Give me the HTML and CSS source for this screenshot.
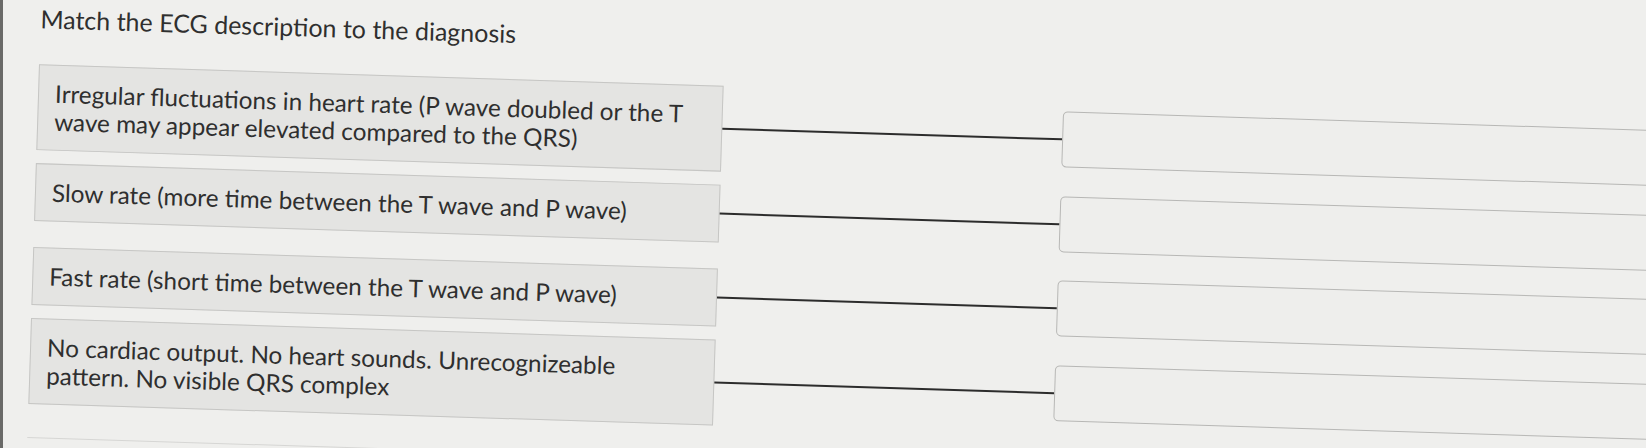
FILE: index.html
```html
<!DOCTYPE html>
<html lang="en">
<head>
<meta charset="utf-8">
<title>Match the ECG description to the diagnosis</title>
<link rel="stylesheet" href="styles.css">
</head>
<body>
<div class="page">
  <h1 class="title">Match the ECG description to the diagnosis</h1>
  <div class="rows">
    <div class="row">
      <div class="prompt">Irregular fluctuations in heart rate (P wave doubled or the T<br>wave may appear elevated compared to the QRS)</div>
      <div class="link"></div>
      <div class="answer"></div>
    </div>
    <div class="row">
      <div class="prompt">Slow rate (more time between the T wave and P wave)</div>
      <div class="link"></div>
      <div class="answer"></div>
    </div>
    <div class="row row-spaced">
      <div class="prompt">Fast rate (short time between the T wave and P wave)</div>
      <div class="link"></div>
      <div class="answer"></div>
    </div>
    <div class="row">
      <div class="prompt">No cardiac output. No heart sounds. Unrecognizeable<br>pattern. No visible QRS complex</div>
      <div class="link"></div>
      <div class="answer"></div>
    </div>
  </div>
  <div class="rule"></div>
</div>
</body>
</html>
```

FILE: styles.css
```css
html, body {
  margin: 0;
  padding: 0;
}

body {
  width: 1646px;
  height: 448px;
  overflow: hidden;
  background: #efefed;
  border-left: 3px solid #6a6a68;
  box-sizing: border-box;
  font-family: Lato, "Open Sans", "Liberation Sans", sans-serif;
  color: #2f2f2f;
}

.page {
  width: 1800px;
  padding: 2px 0 0 38px;
  transform: rotate(1.8deg);
  transform-origin: 0 0;
  box-sizing: border-box;
}

.title {
  margin: 0;
  font-size: 25px;
  line-height: 30px;
  font-weight: 400;
  color: #2f2f2f;
}

.rows {
  margin-top: 31px;
  display: flex;
  flex-direction: column;
  gap: 13px;
}

.row {
  display: flex;
  align-items: center;
}

.row-spaced {
  margin-top: 13px;
}

.prompt {
  flex: none;
  width: 685px;
  box-sizing: border-box;
  padding: 14px 16px;
  background: #e4e4e2;
  border: 1px solid #c6c6c4;
  font-size: 24.3px;
  line-height: 28px;
}

.link {
  flex: none;
  width: 340px;
  height: 2px;
  background: #2c2c2c;
}

.answer {
  flex: none;
  width: 640px;
  height: 56px;
  box-sizing: border-box;
  border: 1px solid #b7b7b5;
  border-radius: 5px;
  background: #eeeeec;
}

.rule {
  margin-top: 33px;
  width: 1700px;
  height: 1px;
  background: #d6d6d4;
}
```
